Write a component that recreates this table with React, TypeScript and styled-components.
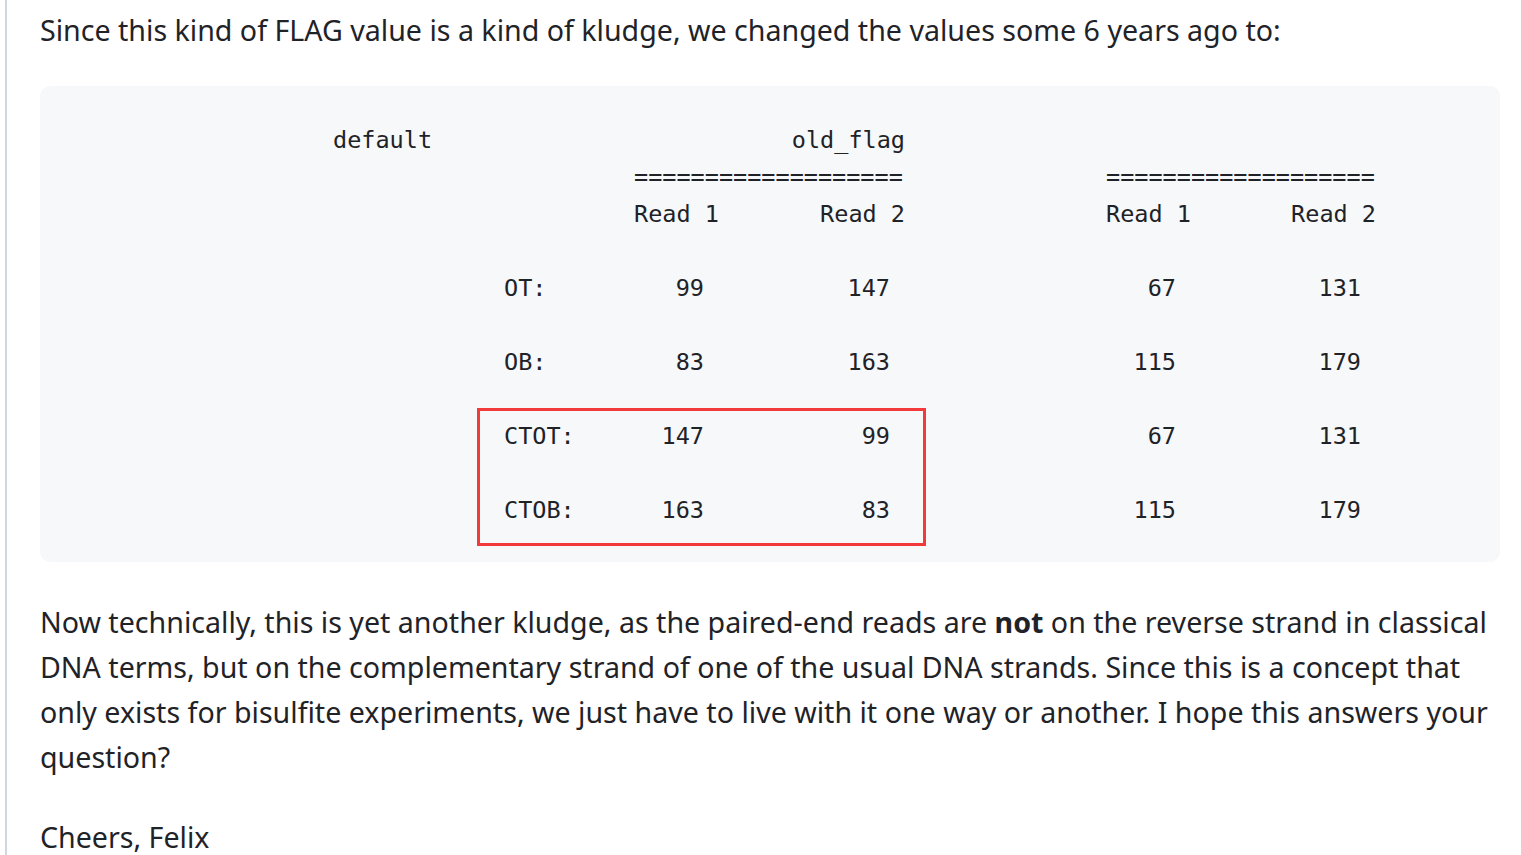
import React from "react";
import styled, { createGlobalStyle } from "styled-components";

const Global = createGlobalStyle`
  html, body { margin: 0; padding: 0; background: #ffffff; }
  body { font-family: "Noto Sans", "Open Sans", sans-serif; color: #1f2328; }
`;

const Page = styled.div`
  display: flex;
  min-height: 855px;
  padding-left: 5px;
  box-sizing: border-box;
`;

const Thread = styled.div`
  width: 2px;
  flex: none;
  background: #d0d7de;
`;

const Body = styled.div`
  margin-left: 33px;
  width: 1460px;
  padding-top: 7px;
`;

const Paragraph = styled.p<{ $gap?: number }>`
  margin: 0 0 ${(p) => p.$gap ?? 35}px 0;
  font-size: 28.6px;
  line-height: 45px;
  letter-spacing: 0;
  strong { font-weight: 700; }
`;

const CodeBlock = styled.div`
  display: grid;
  grid-template-columns: 293px 171px 130px 86px 185px 201px 86px 185px 1fr;
  grid-template-rows: repeat(3, 37px) repeat(4, 74px);
  padding: 36px 0 33px 0;
  margin-bottom: 37px;
  background: #f6f8fa;
  border-radius: 10px;
  font-family: "DejaVu Sans Mono", "Liberation Mono", monospace;
  font-size: 23.5px;
  line-height: 37px;
  color: #1f2328;
`;

const Cell = styled.div<{
  $row: number;
  $col: string;
  $align?: "left" | "right";
  $pad?: number;
}>`
  grid-row: ${(p) => p.$row};
  grid-column: ${(p) => p.$col};
  text-align: ${(p) => p.$align ?? "left"};
  padding-right: ${(p) => p.$pad ?? 0}px;
  align-self: end;
  white-space: pre;
`;

const Highlight = styled.div`
  grid-row: 6 / 8;
  grid-column: 3 / 6;
  margin: 27px -21px -17px -27px;
  border: 3px solid #f23a3a;
  pointer-events: none;
`;

type Row = { label: string; a: [string, string]; b: [string, string] };

const rows: Row[] = [
  { label: "OT:", a: ["99", "147"], b: ["67", "131"] },
  { label: "OB:", a: ["83", "163"], b: ["115", "179"] },
  { label: "CTOT:", a: ["147", "99"], b: ["67", "131"] },
  { label: "CTOB:", a: ["163", "83"], b: ["115", "179"] },
];

const rule = "===================";

export default function App() {
  return (
    <>
      <Global />
      <Page>
        <Thread />
        <Body>
          <Paragraph $gap={34}>
            Since this kind of FLAG value is a kind of kludge, we changed the values some 6 years ago to:
          </Paragraph>
          <CodeBlock>
            <Cell $row={1} $col="2 / 3">default</Cell>
            <Cell $row={1} $col="4 / 6" $align="right">old_flag</Cell>
            <Cell $row={2} $col="4 / 6">{rule}</Cell>
            <Cell $row={2} $col="7 / 9">{rule}</Cell>
            <Cell $row={3} $col="4 / 5">Read 1</Cell>
            <Cell $row={3} $col="5 / 6" $align="right">Read 2</Cell>
            <Cell $row={3} $col="7 / 8">Read 1</Cell>
            <Cell $row={3} $col="8 / 9" $align="right" $pad={1}>Read 2</Cell>
            {rows.map((r, i) => (
              <React.Fragment key={r.label}>
                <Cell $row={4 + i} $col="3 / 4">{r.label}</Cell>
                <Cell $row={4 + i} $col="4 / 5" $align="right" $pad={16}>{r.a[0]}</Cell>
                <Cell $row={4 + i} $col="5 / 6" $align="right" $pad={15}>{r.a[1]}</Cell>
                <Cell $row={4 + i} $col="7 / 8" $align="right" $pad={16}>{r.b[0]}</Cell>
                <Cell $row={4 + i} $col="8 / 9" $align="right" $pad={16}>{r.b[1]}</Cell>
              </React.Fragment>
            ))}
            <Highlight />
          </CodeBlock>
          <Paragraph>
            Now technically, this is yet another kludge, as the paired-end reads are <strong>not</strong> on the reverse strand in classical DNA terms, but on the complementary strand of one of the usual DNA strands. Since this is a concept that only exists for bisulfite experiments, we just have to live with it one way or another. I hope this answers your question?
          </Paragraph>
          <Paragraph>Cheers, Felix</Paragraph>
        </Body>
      </Page>
    </>
  );
}
